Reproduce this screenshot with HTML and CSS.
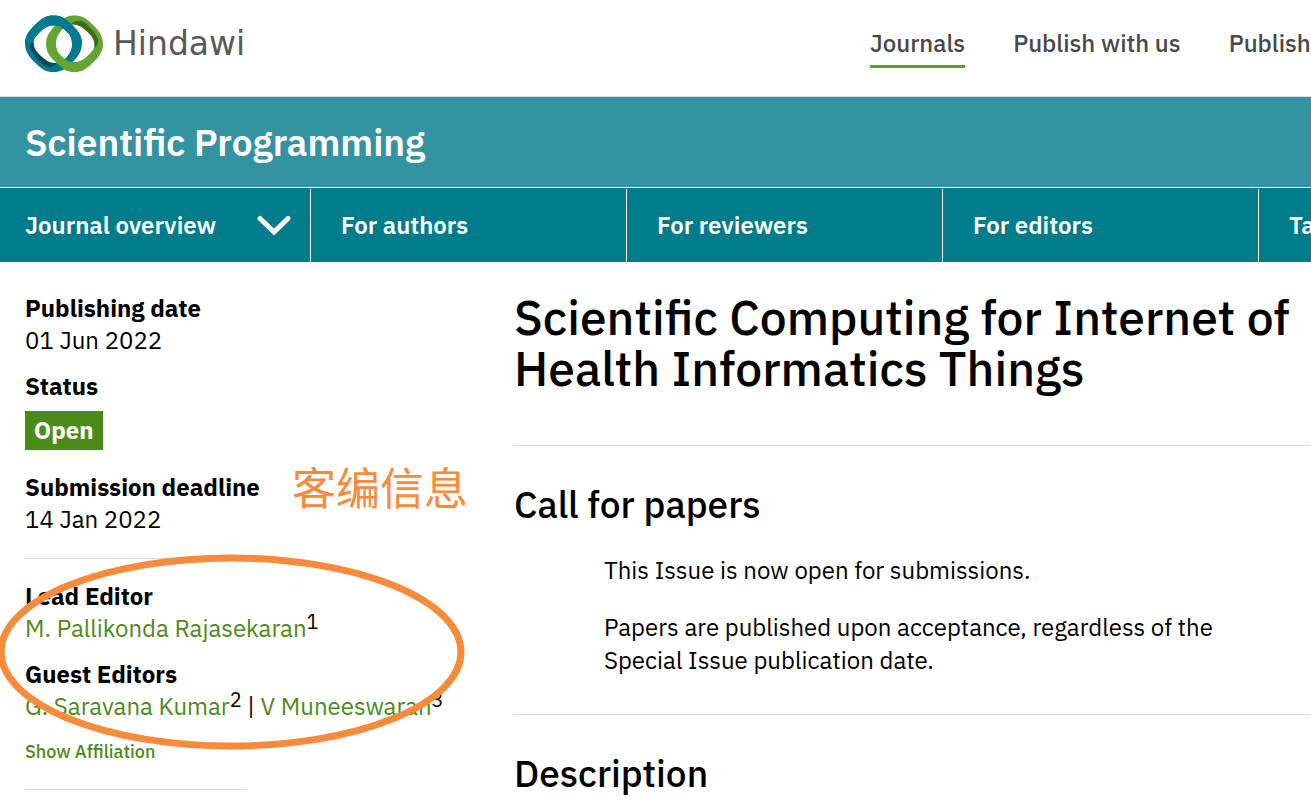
FILE: index.html
```html
<!DOCTYPE html>
<html lang="en">
<head>
<meta charset="utf-8">
<title>Scientific Programming | Hindawi</title>
<link rel="stylesheet" href="styles.css">
</head>
<body>
<header class="site-header">
  <a class="brand" href="#" aria-label="Hindawi">
    <svg class="brand-mark" viewBox="0 0 78 58" width="78" height="58" aria-hidden="true">
      <defs>
        <path id="ring" fill-rule="evenodd" d="M28.500 0.500C36 0.500 39.500 3 45 8C52 14.500 57 20 57 28.500C57 37 52 43 45 49.500C39.500 54.500 36 57 28.500 57C21 57 17.500 54.500 12 49.500C5 43 0 37 0 28.500C0 20 5 14.500 12 8C17.500 3 21 0.500 28.500 0.500ZM28.500 10.500C23 10.500 19.500 13 15.500 16.500C12 20 8.500 23.500 8.500 26C7.500 34 10 38 15 42.500C19.500 46.500 25 49 32 48C37 47 40 44 42.500 41C45.500 37.500 47 34 47 29C47 23 45 19.500 41 16C36.500 12 34 10.500 28.500 10.500Z"/>
        <clipPath id="upper"><rect width="78" height="28"/></clipPath>
      </defs>
      <use href="#ring" fill="#007a92"/>
      <path fill="#004a5a" d="M8.500 24C4.500 27 4 32 6 36C8 40 13 45 17 49C21 52.500 28 53.500 32 48C27 48.500 23 47 19 43.500C11 37 8 33 8.500 24Z"/>
      <use href="#ring" fill="#62a52f" transform="rotate(180 39 28.750)"/>
      <path fill="#3f6a1e" d="M69.500 33.500C73.500 30.500 74 25.500 72 21.500C70 17.500 65 12.500 61 8.500C57 5 50 4 46 9.500C51 9 55 10.500 59 14C67 20.500 70 24.500 69.500 33.500Z"/>
      <use href="#ring" fill="#007a92" clip-path="url(#upper)"/>
    </svg>
    <span class="brand-name">Hindawi</span>
  </a>
  <nav class="site-nav" aria-label="Main">
    <a class="active" href="#">Journals</a>
    <a href="#">Publish with us</a>
    <a href="#">Publishing partnerships</a>
  </nav>
</header>

<div class="journal-band"><a href="#">Scientific Programming</a></div>

<nav class="journal-nav" aria-label="Journal">
  <button type="button">Journal overview
    <svg viewBox="0 0 34 22" width="34" height="22" aria-hidden="true"><path d="M3 4.500L17 18L31 4.500" fill="none" stroke="#fff" stroke-width="5" stroke-linecap="round"/></svg>
  </button>
  <a href="#">For authors</a>
  <a href="#">For reviewers</a>
  <a href="#">For editors</a>
  <a href="#">Table of Contents</a>
</nav>

<div class="page">
  <aside class="sidebar">
    <section class="fact"><h2>Publishing date</h2><p>01 Jun 2022</p></section>
    <section class="fact"><h2>Status</h2><span class="badge">Open</span></section>
    <section class="fact"><h2>Submission deadline</h2><p>14 Jan 2022</p></section>
    <hr>
    <section class="fact"><h2>Lead Editor</h2><p><a href="#">M. Pallikonda Rajasekaran</a><sup>1</sup></p></section>
    <section class="fact"><h2>Guest Editors</h2><p><a href="#">G. Saravana Kumar</a><sup>2</sup> | <a href="#">V Muneeswaran</a><sup>3</sup></p></section>
    <button class="affiliation" type="button">Show Affiliation</button>
    <hr>
    <span class="note" lang="zh">客编信息</span>
    <svg class="note-ring" viewBox="0 0 470 200" width="470" height="200" aria-hidden="true"><ellipse cx="235" cy="100" rx="230" ry="94" fill="none" stroke="#f88a3a" stroke-width="7"/></svg>
  </aside>
  <main class="content">
    <h1>Scientific Computing for Internet of<br>Health Informatics Things</h1>
    <section>
      <h2>Call for papers</h2>
      <div class="notice">
        <p>This Issue is now open for submissions.</p>
        <p>Papers are published upon acceptance, regardless of the<br>Special Issue publication date.</p>
      </div>
    </section>
    <section>
      <h2>Description</h2>
    </section>
  </main>
</div>
</body>
</html>
```
FILE: styles.css
```css
* { box-sizing: border-box; }

body {
  margin: 0;
  overflow: hidden;
  color: #000;
  background: #fff;
  font: 400 24px/32px "IBM Plex Sans", "Open Sans", "Noto Sans", sans-serif;
}

h1, h2, p { margin: 0; }
a { color: inherit; text-decoration: none; }
button { border: 0; background: none; font: inherit; color: inherit; cursor: pointer; }

.site-header {
  display: flex;
  justify-content: space-between;
  height: 97px;
  padding-left: 25px;
  border-bottom: 1px solid #ddd;
  overflow: hidden;
}
.brand { display: flex; align-items: center; gap: 10px; height: 87px; }
.brand-name { color: #58595b; font: 33px/40px "DejaVu Sans", sans-serif; }
.site-nav {
  display: flex;
  gap: 48px;
  width: 441px;
  padding-top: 27px;
  white-space: nowrap;
  color: #484848;
  font-weight: 500;
}
.site-nav a { height: 41px; }
.site-nav .active { border-bottom: 3px solid #58a618; }

.journal-band {
  padding: 21px 25px;
  border-bottom: 1px solid #fff;
  background: #3493a2;
  color: #fff;
  font-size: 37px;
  line-height: 48px;
  font-weight: 600;
}

.journal-nav {
  display: flex;
  overflow: hidden;
  padding-top: 1px;
  background: #007c8b;
  color: #fff;
  font-weight: 600;
  white-space: nowrap;
}
.journal-nav > * {
  display: flex;
  flex: 0 0 316px;
  align-items: center;
  justify-content: space-between;
  height: 73px;
  padding: 0 30px 2px;
  border-right: 1px solid #fff;
}
.journal-nav > button { flex-basis: 311px; padding: 0 19px 2px 25px; }

.page { display: grid; grid-template-columns: 489px 1fr; padding: 30px 0 0 25px; }

.sidebar { position: relative; white-space: nowrap; }
.fact { margin-bottom: 14px; }
.fact h2 { font-size: 24px; line-height: 32px; font-weight: 700; }
.fact a, .affiliation { color: #4d8b18; }
.badge {
  display: inline-block;
  margin: 9px 0 7px;
  padding: 0 9px;
  background: #4d8b18;
  color: #fff;
  line-height: 39px;
  font-weight: 700;
}
sup { font-size: 20px; line-height: 0; vertical-align: 8px; }
.affiliation { display: block; padding: 2px 0 0; font-size: 18px; line-height: 28px; font-weight: 500; }
hr { width: 221px; height: 1px; margin: 23px 0 21px; border: 0; background: #ddd; }

.note {
  position: absolute;
  top: 161px;
  left: 267px;
  color: #f88a3a;
  font: 44px/66px "Noto Sans CJK SC", sans-serif;
}
.note-ring { position: absolute; top: 260px; left: -29px; pointer-events: none; }

.content { min-width: 0; }
.content h1 { padding-bottom: 51px; font-size: 48px; line-height: 51px; font-weight: 500; white-space: nowrap; }
.content section { border-top: 1px solid #ddd; padding: 34px 0 37px; }
.content h2 { font-size: 37px; line-height: 48px; font-weight: 500; }
.notice { display: grid; gap: 24px; margin: 26px 0 0 90px; white-space: nowrap; line-height: 33px; }
```
